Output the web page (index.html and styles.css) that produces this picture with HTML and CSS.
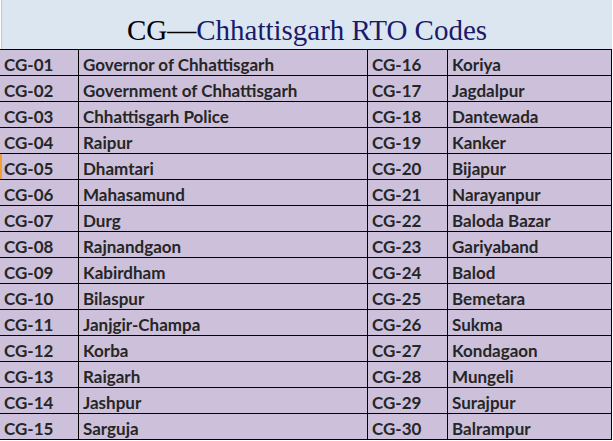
FILE: index.html
```html
<!DOCTYPE html>
<html>
<head>
<meta charset="utf-8">
<link rel="stylesheet" href="styles.css">
</head>
<body>
<div class="sheet">
  <div class="title-band">
    <h1 class="title"><span class="prefix">CG—</span>Chhattisgarh RTO Codes</h1>
  </div>
  <div class="grid">
    <div class="cell">CG-01</div><div class="cell">Governor of Chhattisgarh</div><div class="cell">CG-16</div><div class="cell">Koriya</div>
    <div class="cell">CG-02</div><div class="cell">Government of Chhattisgarh</div><div class="cell">CG-17</div><div class="cell">Jagdalpur</div>
    <div class="cell">CG-03</div><div class="cell">Chhattisgarh Police</div><div class="cell">CG-18</div><div class="cell">Dantewada</div>
    <div class="cell">CG-04</div><div class="cell">Raipur</div><div class="cell">CG-19</div><div class="cell">Kanker</div>
    <div class="cell mark">CG-05</div><div class="cell">Dhamtari</div><div class="cell">CG-20</div><div class="cell">Bijapur</div>
    <div class="cell">CG-06</div><div class="cell">Mahasamund</div><div class="cell">CG-21</div><div class="cell">Narayanpur</div>
    <div class="cell">CG-07</div><div class="cell">Durg</div><div class="cell">CG-22</div><div class="cell">Baloda Bazar</div>
    <div class="cell">CG-08</div><div class="cell">Rajnandgaon</div><div class="cell">CG-23</div><div class="cell">Gariyaband</div>
    <div class="cell">CG-09</div><div class="cell">Kabirdham</div><div class="cell">CG-24</div><div class="cell">Balod</div>
    <div class="cell">CG-10</div><div class="cell">Bilaspur</div><div class="cell">CG-25</div><div class="cell">Bemetara</div>
    <div class="cell">CG-11</div><div class="cell">Janjgir-Champa</div><div class="cell">CG-26</div><div class="cell">Sukma</div>
    <div class="cell">CG-12</div><div class="cell">Korba</div><div class="cell">CG-27</div><div class="cell">Kondagaon</div>
    <div class="cell">CG-13</div><div class="cell">Raigarh</div><div class="cell">CG-28</div><div class="cell">Mungeli</div>
    <div class="cell">CG-14</div><div class="cell">Jashpur</div><div class="cell">CG-29</div><div class="cell">Surajpur</div>
    <div class="cell">CG-15</div><div class="cell">Sarguja</div><div class="cell">CG-30</div><div class="cell">Balrampur</div>
  </div>
</div>
</body>
</html>
```
FILE: styles.css
```css
html, body {
  margin: 0;
  padding: 0;
  background: #ffffff;
}
.sheet {
  width: 612px;
  overflow: hidden;
}
.title-band {
  height: 49px;
  background: #dce6f1;
  display: flex;
  align-items: flex-end;
  justify-content: center;
  width: 611px;
  box-sizing: border-box;
  border-left: 1px solid #b4c9e4;
  margin-left: 1px;
}
.title {
  margin: 0;
  font-family: "Liberation Serif", "Times New Roman", serif;
  font-weight: normal;
  font-size: 29px;
  line-height: 32px;
  padding-bottom: 3px;
  color: #1a1a6b;
}
.prefix {
  color: #000000;
}
.grid {
  display: grid;
  grid-template-columns: 78px 288px 79px 163px;
  grid-auto-rows: 25px;
  gap: 1px;
  background: #000000;
  padding: 1px 1px 1px 0;
  width: 612px;
  box-sizing: border-box;
}
.cell {
  background: #ccc0da;
  font-family: Lato, "Liberation Sans", sans-serif;
  font-weight: bold;
  font-size: 17px;
  color: #262626;
  padding: 4px 0 0 4px;
  line-height: 21px;
  white-space: nowrap;
  overflow: hidden;
}
.mark {
  box-shadow: inset 2px 0 0 0 #f0a030;
}
```
